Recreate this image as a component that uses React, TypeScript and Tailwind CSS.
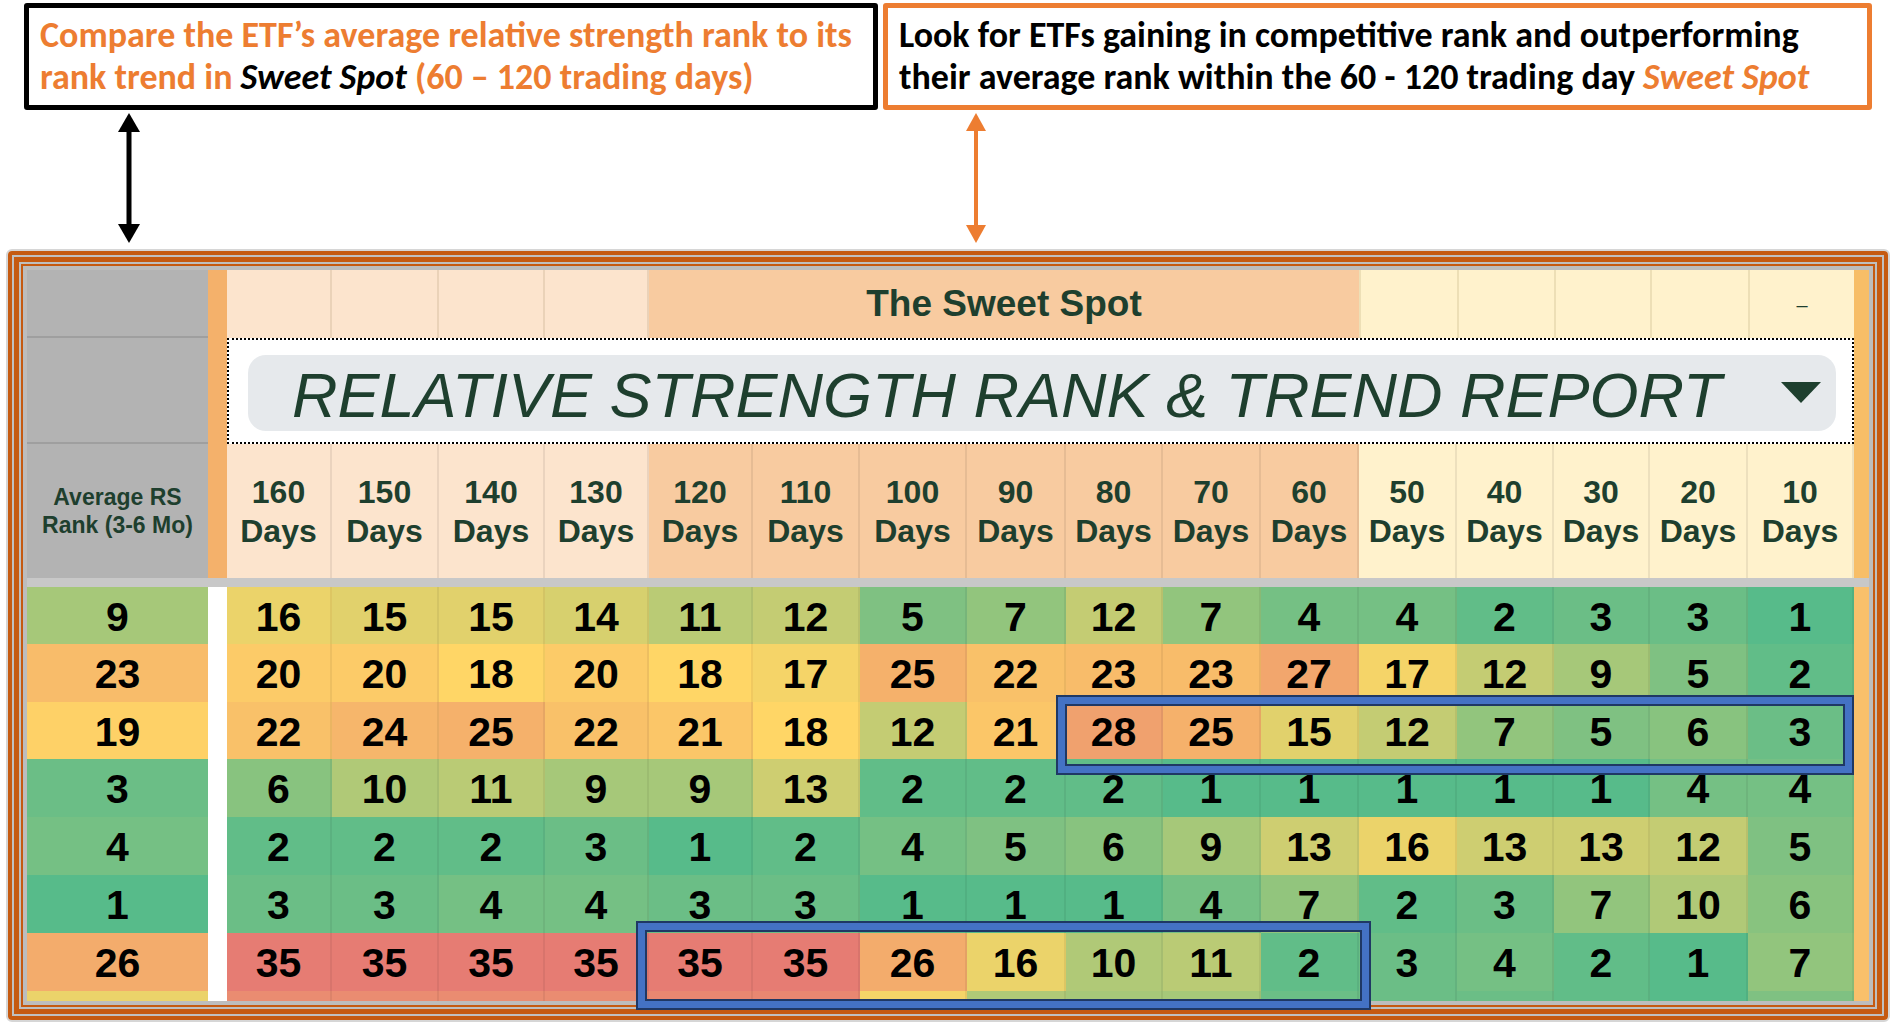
import React from 'react';

const cols = [160, 150, 140, 130, 120, 110, 100, 90, 80, 70, 60, 50, 40, 30, 20, 10];

// first value is the 3-6 month average, then one per column
const rows: number[][] = [
  [9, 16, 15, 15, 14, 11, 12, 5, 7, 12, 7, 4, 4, 2, 3, 3, 1],
  [23, 20, 20, 18, 20, 18, 17, 25, 22, 23, 23, 27, 17, 12, 9, 5, 2],
  [19, 22, 24, 25, 22, 21, 18, 12, 21, 28, 25, 15, 12, 7, 5, 6, 3],
  [3, 6, 10, 11, 9, 9, 13, 2, 2, 2, 1, 1, 1, 1, 1, 4, 4],
  [4, 2, 2, 2, 3, 1, 2, 4, 5, 6, 9, 13, 16, 13, 13, 12, 5],
  [1, 3, 3, 4, 4, 3, 3, 1, 1, 1, 4, 7, 2, 3, 7, 10, 6],
  [26, 35, 35, 35, 35, 35, 35, 26, 16, 10, 11, 2, 3, 4, 2, 1, 7],
];
const rowHeights = [57, 58, 57, 58, 58, 58, 58];
const partialRow = [16, 32, 32, 32, 32, 33, 33, 17, 10, 9, 9, 3, 3, 3, 2, 1, 5];

const grid =
  'grid grid-cols-[181px_19px_105px_107px_106px_104px_104px_107px_107px_99px_97px_98px_98px_98px_97px_96px_98px_106px_15px]';

// green -> yellow -> red scale, 1 to 35 with midpoint 18
const heat = (v: number) => {
  const lo = [87, 187, 138];
  const mid = [255, 214, 102];
  const hi = [230, 124, 115];
  const [a, b, t] = v <= 18 ? [lo, mid, (v - 1) / 17] : [mid, hi, (v - 18) / 17];
  const c = a.map((x, i) => Math.round(x + (b[i] - x) * t));
  return `rgb(${c[0]}, ${c[1]}, ${c[2]})`;
};

const headerBg = (d: number) => {
  if (d > 120) return 'bg-[#FCE4CD]';
  if (d >= 60) return 'bg-[#F8CBA0]';
  return 'bg-[#FFF2CC]';
};

const BlueBox = ({ className }: { className: string }) => (
  <div className={`absolute border-2 border-[#1F3864] ${className}`}>
    <div className="h-full border-[7px] border-[#4472C4]">
      <div className="h-full border-2 border-[#1F3864]" />
    </div>
  </div>
);

const App = () => {
  return (
    <div className="relative w-[1896px] h-[1026px] overflow-hidden bg-white font-['Liberation_Sans',Arial,sans-serif]">
      {/* callouts */}
      <div className="flex gap-[5px] pl-[24px] pt-[3px] font-['Carlito','Lato',sans-serif] font-bold text-[36px] leading-[42px] whitespace-nowrap">
        <div className="w-[854px] h-[107px] border-[5px] border-black rounded-[3px] px-[11px] pt-[6px] text-[#ED7D31]">
          Compare the ETF’s average relative strength rank to its
          <br />
          rank trend in <span className="italic text-black">Sweet Spot</span> (60 – 120 trading days)
        </div>
        <div className="w-[989px] h-[107px] border-[5px] border-[#ED7D31] rounded-[3px] px-[11px] pt-[6px] text-black">
          Look for ETFs gaining in competitive rank and outperforming
          <br />
          their average rank within the 60 - 120 trading day{' '}
          <span className="italic text-[#ED7D31]">Sweet Spot</span>
        </div>
      </div>

      {/* connector arrows */}
      <svg width="1896" height="139" className="block">
        <polygon points="129,3 118,22 140,22" fill="#000" />
        <rect x="126.5" y="20" width="5" height="97" fill="#000" />
        <polygon points="129,133 118,114 140,114" fill="#000" />
        <polygon points="976,3 966,21 986,21" fill="#ED7D31" />
        <rect x="974" y="19" width="4" height="98" fill="#ED7D31" />
        <polygon points="976,133 966,115 986,115" fill="#ED7D31" />
      </svg>

      {/* report frame */}
      <div className="ml-[6px] w-[1884px] h-[773px] rounded-[6px] border-2 border-[#D6D6D6]">
        <div className="h-full rounded-[4px] border-[4px] border-[#C55A11]">
          <div className="h-full border-2 border-[#C0C0C0]">
            <div className="h-full border-[5px] border-[#C55A11]">
              <div className="h-full border-2 border-[#BFBFBF]">
                <div className="h-full border-2 border-[#C55A11]">
                  <div className="h-full border-[4px] border-[#BDBDBD] overflow-hidden">
                    {/* header row 1 */}
                    <div className={`${grid} h-[68px] text-[#1E3F2E] font-bold`}>
                      <div className="bg-[#B3B3B3] border-b-2 border-[#9F9F9F]" />
                      <div className="bg-[#F4B16B]" />
                      {[160, 150, 140, 130].map((d) => (
                        <div key={d} className="bg-[#FCE4CD] border-r-2 border-[#EAD2B8]" />
                      ))}
                      <div className="col-span-7 bg-[#F8CBA0] flex items-center justify-center text-[37px]">
                        The Sweet Spot
                      </div>
                      {[50, 40, 30, 20].map((d) => (
                        <div key={d} className="bg-[#FFF2CC] border-l-2 border-[#EDDFB6]" />
                      ))}
                      <div className="bg-[#FFF2CC] border-l-2 border-[#EDDFB6] flex items-center justify-center text-[20px] font-normal pt-[2px]">
                        –
                      </div>
                      <div className="bg-[#F7BE67]" />
                    </div>

                    {/* header row 2 - report title */}
                    <div className={`${grid} h-[106px]`}>
                      <div className="bg-[#B3B3B3] border-b-2 border-[#9F9F9F]" />
                      <div className="bg-[#F4B16B]" />
                      <div className="col-span-16 bg-white border-[2px] border-dotted border-black pl-[19px] pr-[16px] pt-[15px] pb-[11px]">
                        <div className="h-full rounded-[18px] bg-[#E6E9EC] flex items-center justify-between pl-[44px] pr-[15px]">
                          <span className="italic text-[63px] leading-none text-[#1E3F2E] pt-[4px]">
                            RELATIVE STRENGTH RANK &amp; TREND REPORT
                          </span>
                          <svg width="40" height="22" viewBox="0 0 40 22">
                            <polygon points="0,0 40,0 20,21" fill="#1E3F2E" />
                          </svg>
                        </div>
                      </div>
                      <div className="bg-[#F7BE67]" />
                    </div>

                    {/* header row 3 - periods */}
                    <div className={`${grid} h-[134px] text-[#1E3F2E] font-bold`}>
                      <div className="bg-[#B3B3B3] flex items-center justify-center text-center text-[23px] leading-[28px]">
                        Average RS
                        <br />
                        Rank (3-6 Mo)
                      </div>
                      <div className="bg-[#F4B16B]" />
                      {cols.map((d) => (
                        <div
                          key={d}
                          className={`${headerBg(d)} border-r-2 border-black/[0.07] flex items-center justify-center text-center text-[32px] leading-[39px] pt-[2px]`}
                        >
                          {d}
                          <br />
                          Days
                        </div>
                      ))}
                      <div className="bg-[#F7BE67]" />
                    </div>

                    <div className="h-[9px] bg-[#C8C8C8]" />

                    {/* ranks */}
                    {rows.map((r, i) => (
                      <div key={i} className={grid} style={{ height: rowHeights[i] }}>
                        <div
                          className="flex items-center justify-center border-b-2 border-black/[0.06] text-[41px] font-bold text-black"
                          style={{ backgroundColor: heat(r[0]) }}
                        >
                          {r[0]}
                        </div>
                        <div className="bg-white border-b-2 border-[#DCDCDC]" />
                        {r.slice(1).map((v, j) => (
                          <div
                            key={j}
                            className="flex items-center justify-center border-r-2 border-b-2 border-black/[0.06] text-[41px] font-bold text-black"
                            style={{ backgroundColor: heat(v) }}
                          >
                            {v}
                          </div>
                        ))}
                        <div className="bg-[#F9C06B] border-b-2 border-black/[0.05]" />
                      </div>
                    ))}
                    <div className={`${grid} h-[10px]`}>
                      <div style={{ backgroundColor: heat(partialRow[0]) }} />
                      <div className="bg-white" />
                      {partialRow.slice(1).map((v, j) => (
                        <div key={j} className="border-r-2 border-black/[0.06]" style={{ backgroundColor: heat(v) }} />
                      ))}
                      <div className="bg-[#F9C06B]" />
                    </div>
                  </div>
                </div>
              </div>
            </div>
          </div>
        </div>
      </div>

      {/* highlight boxes */}
      <BlueBox className="left-[1056px] top-[695px] w-[798px] h-[80px]" />
      <BlueBox className="left-[636px] top-[921px] w-[735px] h-[89px]" />
    </div>
  );
};

export default App;
